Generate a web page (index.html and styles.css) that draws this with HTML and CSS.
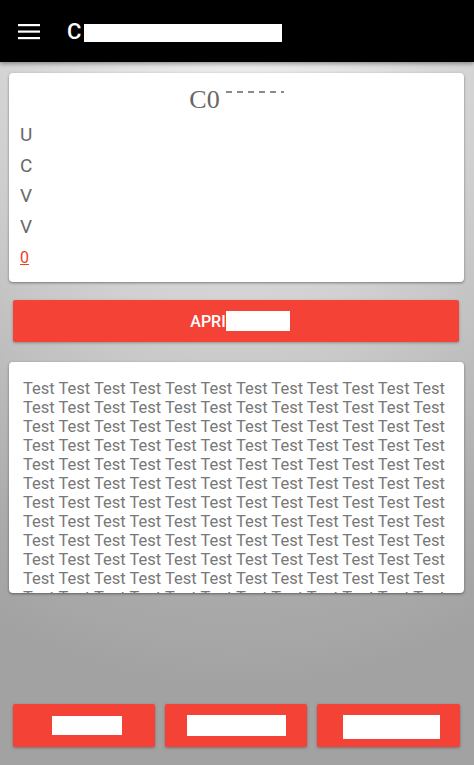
FILE: index.html
```html
<!DOCTYPE html>
<html>
<head>
<meta charset="utf-8">
<link rel="stylesheet" href="styles.css">
</head>
<body>
<div class="app">
  <header class="toolbar">
    <svg class="menu" width="22" height="16" viewBox="0 0 22 16"><rect x="0" y="0" width="22" height="2.2" fill="#fff"/><rect x="0" y="6.5" width="22" height="2.2" fill="#fff"/><rect x="0" y="13" width="22" height="2.2" fill="#fff"/></svg>
    <div class="title">C<span class="redact redact-title"></span></div>
  </header>
  <main class="content">
    <section class="card info">
      <div class="info-title">C0<span class="cut"></span></div>
      <div class="row">U</div>
      <div class="row">C</div>
      <div class="row">V</div>
      <div class="row">V</div>
      <div class="row"><a class="link">0</a></div>
    </section>
    <button class="btn wide">APRI<span class="redact redact-apri"></span></button>
    <section class="card notes">
      <p>Test Test Test Test Test Test Test Test Test Test Test Test Test Test Test Test Test Test Test Test Test Test Test Test Test Test Test Test Test Test Test Test Test Test Test Test Test Test Test Test Test Test Test Test Test Test Test Test Test Test Test Test Test Test Test Test Test Test Test Test Test Test Test Test Test Test Test Test Test Test Test Test Test Test Test Test Test Test Test Test Test Test Test Test Test Test Test Test Test Test Test Test Test Test Test Test Test Test Test Test Test Test Test Test Test Test Test Test Test Test Test Test Test Test Test Test Test Test Test Test Test Test Test Test Test Test Test Test Test Test Test Test Test Test Test Test Test Test Test Test Test Test Test Test Test Test Test Test Test Test Test Test Test Test Test Test Test Test</p>
    </section>
    <nav class="actions">
      <button class="btn"><span class="redact r1"></span></button>
      <button class="btn"><span class="redact r2"></span></button>
      <button class="btn"><span class="redact r3"></span></button>
    </nav>
  </main>
</div>
</body>
</html>
```
FILE: styles.css
```css
* { box-sizing: border-box; }
html, body { margin: 0; padding: 0; height: 100%; }
body {
  font-family: Roboto, "Liberation Sans", sans-serif;
  background: radial-gradient(ellipse 120% 90% at 50% 0%, #f2f2f2 0%, #d2d2d2 45%, #ababab 85%, #a2a2a2 100%);
  background-color: #b0b0b0;
}
.app { height: 765px; display: flex; flex-direction: column; overflow: hidden; }
.toolbar {
  height: 62px;
  background: #000;
  display: flex;
  align-items: center;
  padding-left: 18px;
  box-shadow: 0 2px 4px rgba(0,0,0,0.35);
  flex: none;
}
.menu { display: block; margin-top: 1px; }
.title {
  color: #fff;
  font-size: 22px;
  font-weight: 500;
  margin-left: 27px;
  display: flex;
  align-items: center;
  margin-top: 1px;
}
.redact { display: inline-block; background: #fff; }
.redact-title { width: 198px; height: 18px; margin-left: 3px; margin-top: 2px; }
.content {
  flex: 1;
  display: flex;
  flex-direction: column;
  padding: 11px 10px 18px 9px;
}
.card {
  background: #fff;
  border-radius: 4px;
  box-shadow: 0 1px 3px rgba(0,0,0,0.3), 0 1px 2px rgba(0,0,0,0.15);
}
.info {
  height: 209px;
  padding: 12px 11px 10px 11px;
}
.info-title {
  font-family: "Liberation Serif", serif;
  font-size: 26px;
  color: #666;
  text-align: center;
  line-height: 30px;
  height: 30px;
  margin-bottom: 5px;
}
.cut {
  display: inline-block;
  width: 58px;
  height: 2px;
  background: repeating-linear-gradient(90deg, #8a8a8a 0 6px, transparent 6px 11px);
  vertical-align: top;
  margin-top: 6px;
  margin-left: 6px;
}
.row {
  font-size: 19px;
  color: #6a6a6a;
  line-height: 30.5px;
  height: 30.5px;
}
.link {
  color: #f0401e;
  text-decoration: underline;
  font-size: 16px;
}
.btn {
  background: #f44336;
  border: none;
  border-radius: 2px;
  color: #fff;
  font-family: Roboto, "Liberation Sans", sans-serif;
  font-weight: 500;
  font-size: 16px;
  box-shadow: 0 1px 3px rgba(0,0,0,0.3);
  display: flex;
  align-items: center;
  justify-content: center;
  padding: 0;
}
.wide {
  height: 42px;
  margin: 18px 5px 20px 4px;
  padding-left: 8px;
}
.redact-apri { width: 64px; height: 20px; }
.notes {
  height: 231px;
  overflow: hidden;
  padding: 17px 6px 0 14px;
}
.notes p {
  margin: 0;
  font-size: 16.5px;
  line-height: 19px;
  color: #787878;
}
.actions {
  margin-top: auto;
  display: grid;
  grid-template-columns: 142px 142px 143px;
  gap: 10px;
  padding: 0 5px 0 4px;
}
.actions .btn { height: 43px; }
.r1 { width: 70px; height: 19px; margin-left: 6px; }
.r2 { width: 99px; height: 21px; }
.r3 { width: 97px; height: 24px; margin-top: 3px; margin-left: 6px; }
```
